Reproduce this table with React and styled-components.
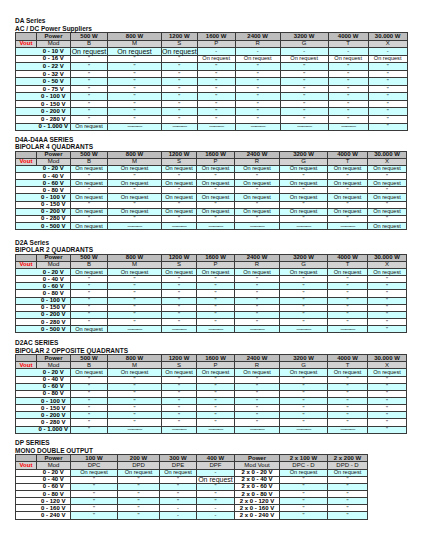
import React from 'react';
import styled, { createGlobalStyle } from 'styled-components';

const GlobalStyle = createGlobalStyle`
  html, body {
    margin: 0;
    padding: 0;
    background: #fff;
  }
  body {
    font-family: "Liberation Sans", Arial, sans-serif;
    color: #000;
  }
`;

const Q = '"';
const DASH = '———';
const OR = 'On request';
const BIG = 'On request!';

const W8 = ['500 W', '800 W', '1200 W', '1600 W', '2400 W', '3200 W', '4000 W', '30.000 W'];
const M8 = ['B', 'M', 'S', 'P', 'R', 'G', 'T', 'X'];
const COLS = [21, 34, 37, 54, 35, 38, 45, 48, 40, 39];
const COLS_DP = [21, 34, 47, 42, 37, 38, 45, 48, 40];

const all = (v) => Array(8).fill(v);
const quoted = (labels) => labels.map((l) => [l, ...all(Q)]);
const dashes = Array(6).fill(DASH);

const series = [
    {
        name: 'DA Series',
        sub: 'AC / DC Power Suppliers',
        gap: 0,
        rowH: 7.55,
        cols: COLS,
        head: ['', 'Power', ...W8],
        mods: ['Vout', 'Mod', ...M8],
        rows: [
            ['0 - 10 V', BIG, BIG, BIG, '-', '-', '-', '-', '-'],
            ['0 - 16 V', Q, Q, Q, OR, OR, OR, OR, OR],
            ...quoted(['0 - 22 V', '0 - 32 V', '0 - 50 V', '0 - 75 V', '0 - 100 V', '0 - 150 V', '0 - 200 V', '0 - 280 V']),
            ['0 - 1.000 V', OR, ...dashes, Q],
        ],
    },
    {
        name: 'D4A-D4AA SERIES',
        sub: 'BIPOLAR 4 QUADRANTS',
        gap: 4.5,
        rowH: 7.15,
        cols: COLS,
        head: ['', 'Power', ...W8],
        mods: ['Vout', 'Mod', ...M8],
        rows: [
            ['0 - 20 V', ...all(OR)],
            ['0 - 40 V', ...all(Q)],
            ['0 - 60 V', ...all(OR)],
            ['0 - 80 V', ...all(Q)],
            ['0 - 100 V', ...all(OR)],
            ['0 - 150 V', ...all(Q)],
            ['0 - 200 V', ...all(OR)],
            ['0 - 280 V', ...all(Q)],
            ['0 - 500 V', OR, ...dashes, OR],
        ],
    },
    {
        name: 'D2A Series',
        sub: 'BIPOLAR 2 QUADRANTS',
        gap: 8.6,
        rowH: 7.15,
        cols: COLS,
        head: ['', 'Power', ...W8],
        mods: ['Vout', 'Mod', ...M8],
        rows: [
            ['0 - 20 V', ...all(OR)],
            ...quoted(['0 - 40 V', '0 - 60 V', '0 - 80 V', '0 - 100 V', '0 - 150 V', '0 - 200 V', '0 - 280 V']),
            ['0 - 500 V', OR, ...dashes, Q],
        ],
    },
    {
        name: 'D2AC SERIES',
        sub: 'BIPOLAR 2 OPPOSITE QUADRANTS',
        gap: 5.8,
        rowH: 7.15,
        cols: COLS,
        head: ['', 'Power', ...W8],
        mods: ['Vout', 'Mod', ...M8],
        rows: [
            ['0 - 20 V', ...all(OR)],
            ...quoted(['0 - 40 V', '0 - 60 V', '0 - 80 V', '0 - 100 V', '0 - 150 V', '0 - 200 V', '0 - 280 V']),
            ['0 - 1.000 V', Q, ...dashes, Q],
        ],
    },
    {
        name: 'DP SERIES',
        sub: 'MONO DOUBLE OUTPUT',
        gap: 5.7,
        rowH: 7.15,
        cols: COLS_DP,
        dual: true,
        head: ['', 'Power', '100 W', '200 W', '300 W', '400 W', 'Power', '2 x 100 W', '2 x 200 W'],
        mods: ['Vout', 'Mod', 'DPC', 'DPD', 'DPE', 'DPF', 'Mod Vout', 'DPC - D', 'DPD - D'],
        rows: [
            ['0 - 20 V', OR, OR, OR, '-', '2 x 0 - 20 V', OR, OR],
            ['0 - 40 V', Q, Q, Q, BIG, '2 x 0 - 40 V', Q, Q],
            ['0 - 60 V', Q, Q, Q, Q, '2 x 0 - 60 V', Q, Q],
            ['0 - 80 V', Q, Q, Q, Q, '2 x 0 - 80 V', Q, Q],
            ['0 - 120 V', Q, Q, Q, Q, '2 x 0 - 120 V', Q, Q],
            ['0 - 160 V', Q, Q, '-', '-', '2 x 0 - 160 V', Q, Q],
            ['0 - 240 V', Q, Q, '-', '-', '2 x 0 - 240 V', Q, Q],
        ],
    },
];

const PriceList = () => {
    return (
        <Page>
            <GlobalStyle />
            {series.map((s) => (
                <Block key={s.name} $gap={s.gap}>
                    <Title>{s.name}</Title>
                    <Title>{s.sub}</Title>
                    <Table>
                        <colgroup>
                            {s.cols.map((w, i) => (
                                <Col key={i} $w={w} />
                            ))}
                        </colgroup>
                        <tbody>
                            <Row $h={s.rowH}>
                                {s.head.map((h, i) => (
                                    <HeadCell key={i} $tone='dark'>
                                        {h}
                                    </HeadCell>
                                ))}
                            </Row>
                            <Row $h={s.rowH}>
                                {s.mods.map((m, i) =>
                                    i === 0 ? (
                                        <VoutCell key={i}>{m}</VoutCell>
                                    ) : (
                                        <HeadCell key={i} $tone='light' $plain>
                                            {m}
                                        </HeadCell>
                                    )
                                )}
                            </Row>
                            {s.rows.map((r, ri) => (
                                <Row key={ri} $h={s.rowH} $cyan={ri % 2 === 0}>
                                    <EmptyCell $plain={s.dual} />
                                    {r.map((v, ci) => {
                                        const isLabel = ci === 0 || (s.dual && ci === 5);
                                        if (isLabel) {
                                            return (
                                                <LabelCell key={ci} $plain={s.dual}>
                                                    {v}
                                                </LabelCell>
                                            );
                                        }
                                        return (
                                            <ValueCell key={ci} $big={v === BIG} $dash={v === DASH}>
                                                {v === BIG ? OR : v}
                                            </ValueCell>
                                        );
                                    })}
                                </Row>
                            ))}
                        </tbody>
                    </Table>
                </Block>
            ))}
        </Page>
    );
};

export default PriceList;

const Page = styled.main`
    width: 421px;
    height: 560px;
    box-sizing: border-box;
    padding: 17px 0 0 15px;
    overflow: hidden;
    background: #fff;
`;

const Block = styled.section`
    margin-top: ${(p) => p.$gap}px;
`;

const Title = styled.h2`
    margin: 0;
    font-size: 6.5px;
    line-height: 7.5px;
    font-weight: bold;
    white-space: nowrap;
    color: #111;
`;

const Table = styled.table`
    border-collapse: collapse;
    table-layout: fixed;
    border: 1px solid #333;
    font-size: 5.6px;
`;

const Col = styled.col`
    width: ${(p) => p.$w}px;
`;

const Row = styled.tr`
    height: ${(p) => p.$h}px;
    background: ${(p) => (p.$cyan ? '#ccffff' : '#ffffff')};
`;

const Cell = styled.td`
    padding: 0;
    text-align: center;
    vertical-align: middle;
    white-space: nowrap;
    overflow: visible;
    line-height: 5px;
    border: 1px solid #3a3a3a;
`;

const HeadCell = styled(Cell)`
    background: ${(p) => (p.$tone === 'dark' ? '#bdbdbd' : '#d2d2d2')};
    font-weight: ${(p) => (p.$plain ? 'normal' : 'bold')};
    font-size: 6px;
    color: #111;
`;

const VoutCell = styled(Cell)`
    background: #d2d2d2;
    color: #ff0000;
    font-weight: bold;
    font-size: 6px;
`;

const EmptyCell = styled(Cell)`
    border-right: hidden;
    background: ${(p) => (p.$plain ? '#fff' : 'transparent')};
`;

const LabelCell = styled(Cell)`
    font-weight: bold;
    font-size: 6px;
    background: ${(p) => (p.$plain ? '#fff' : 'transparent')};
`;

const ValueCell = styled(Cell)`
    font-size: ${(p) => (p.$big ? '7px' : '5.6px')};
    letter-spacing: ${(p) => (p.$dash ? '-1px' : '0')};
    color: #111;
`;
